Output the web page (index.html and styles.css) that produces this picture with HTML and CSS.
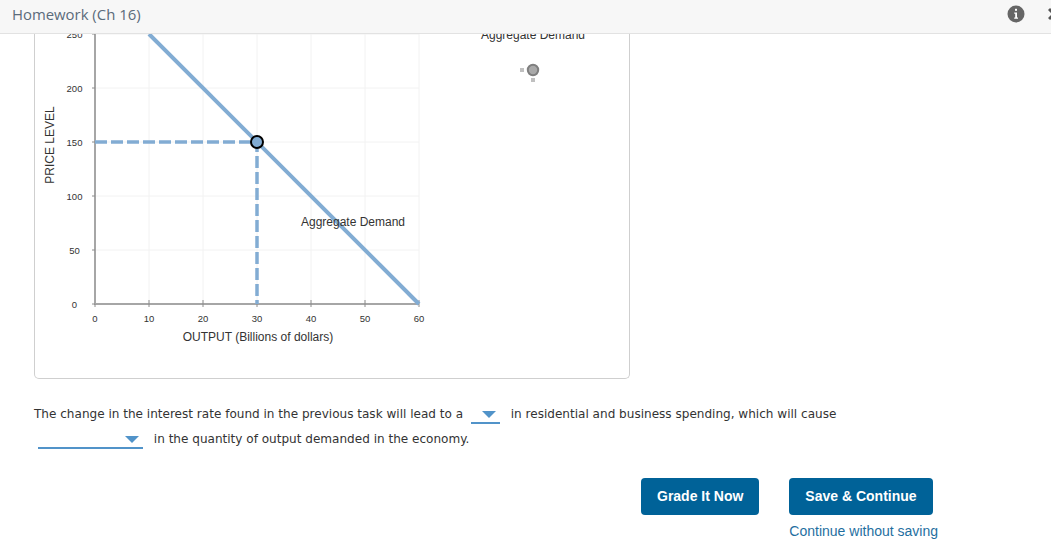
FILE: index.html
```html
<!DOCTYPE html>
<html lang="en">
<head>
<meta charset="utf-8">
<title>Homework (Ch 16)</title>
<link rel="stylesheet" href="styles.css">
</head>
<body>
<header class="topbar">
  <h1 class="title">Homework (Ch 16)</h1>
  <div class="tools">
    <svg class="icon-info" width="18" height="18" viewBox="0 0 18 18"><circle cx="9" cy="9" r="8.5" fill="#666"/><rect x="8" y="3.8" width="2" height="2" fill="#fff"/><path d="M7.2 7.4h2.8v5h1v1.4H7.2v-1.4h1V8.8h-1z" fill="#fff"/></svg>
    <svg class="icon-close" width="12" height="14" viewBox="0 0 12 14"><path d="M1 2l10 10M11 2L1 12" stroke="#555" stroke-width="3" fill="none"/></svg>
  </div>
</header>
<main class="content">
  <section class="panel">
    <svg class="graph" width="594" height="344" viewBox="35 34 594 344">
      <g class="grid">
        <path d="M149 34V304M203 34V304M257 34V304M311 34V304M365 34V304M419 34V304M95 34H419M95 88H419M95 142H419M95 196H419M95 250H419"/>
      </g>
      <g class="axis">
        <path d="M95 34V304H419"/>
        <path class="ticks" d="M92 34H95M92 88H95M92 142H95M92 196H95M92 250H95M92 304H95M95 304v3M149 300v7M203 300v7M257 300v7M311 300v7M365 300v7M419 300v7"/>
      </g>
      <g class="ylabels">
        <text x="74.5" y="38">250</text><text x="74.5" y="92">200</text><text x="74.5" y="146">150</text><text x="74.5" y="200">100</text><text x="74.5" y="254">50</text><text x="74.5" y="308">0</text>
      </g>
      <g class="xlabels">
        <text x="95" y="322">0</text><text x="149" y="322">10</text><text x="203" y="322">20</text><text x="257" y="322">30</text><text x="311" y="322">40</text><text x="365" y="322">50</text><text x="419" y="322">60</text>
      </g>
      <path class="demand" d="M149 34L419 304"/>
      <path class="guide" d="M95 142H257V304"/>
      <circle class="point" cx="257" cy="142" r="6"/>
      <text class="label" x="353" y="226">Aggregate Demand</text>
      <text class="label" x="533" y="39">Aggregate Demand</text>
      <text class="axis-title" x="258" y="341">OUTPUT (Billions of dollars)</text>
      <text class="axis-title" transform="translate(54 145) rotate(-90)">PRICE LEVEL</text>
      <rect class="handle" x="520" y="68" width="4" height="4"/>
      <rect class="handle" x="531" y="78" width="4" height="4"/>
      <circle class="legend-point" cx="533" cy="70" r="5.2"/>
    </svg>
  </section>
  <div class="question">
    <p class="line">The change in the interest rate found in the previous task will lead to a <span class="select select-short"></span> in residential and business spending, which will cause</p>
    <p class="line line-second"><span class="select select-long"></span> in the quantity of output demanded in the economy.</p>
  </div>
  <div class="actions">
    <button class="btn" type="button">Grade It Now</button>
    <div class="save-group">
      <button class="btn" type="button">Save &amp; Continue</button>
      <a class="link" href="#">Continue without saving</a>
    </div>
  </div>
</main>
</body>
</html>
```
FILE: styles.css
```css
* { box-sizing: border-box; }
html, body { margin: 0; height: 100%; overflow: hidden; background: #fff; }
body { width: 1051px; height: 547px; }

.topbar {
  display: flex;
  align-items: center;
  justify-content: space-between;
  height: 34px;
  padding: 0 0 5px 12px;
  background: #f7f7f7;
  border-bottom: 1px solid #e2e2e2;
}
.title {
  margin: 0;
  font: 400 14.9px "Open Sans", sans-serif;
  color: #5b6b7b;
}
.tools { display: flex; align-items: center; gap: 23px; margin-right: -9px; }
.icon-info, .icon-close { display: block; }

.content { padding: 0 0 0 34px; }

.panel {
  width: 596px;
  height: 345px;
  border: 1px solid #cfcfcf;
  border-top: 0;
  border-radius: 0 0 5px 5px;
  overflow: hidden;
}
.graph { display: block; font-family: "Liberation Sans", Arial, sans-serif; }
.grid path { stroke: #f2f2f2; stroke-width: 1; fill: none; }
.axis path { stroke: #a6a6a6; stroke-width: 2; fill: none; }
.axis .ticks { stroke: #8c8c8c; stroke-width: 1; }
.ylabels text { font-size: 9.5px; fill: #333; text-anchor: middle; }
.xlabels text { font-size: 9.5px; fill: #333; text-anchor: middle; }
.demand { stroke: #82acd3; stroke-width: 4; fill: none; }
.guide { stroke: #82acd3; stroke-width: 3.5; stroke-dasharray: 12 4; fill: none; }
.point { fill: #82acd3; stroke: #000; stroke-width: 2; }
.label { font-size: 12px; fill: #333; text-anchor: middle; }
.axis-title { font-size: 12px; fill: #333; text-anchor: middle; }
.handle { fill: #c0c0c0; }
.legend-point { fill: #a9a9a9; stroke: #7f7f7f; stroke-width: 2; }

.question {
  margin-top: 23px;
  font: 400 12.05px/25px "DejaVu Sans", Verdana, sans-serif;
  color: #333;
}
.line { margin: 0; white-space: nowrap; }
.select {
  position: relative;
  display: inline-block;
  height: 20px;
  vertical-align: -6px;
  border-bottom: 2px solid #5193c9;
  margin: 0 7px 0 4px;
}
.select::after {
  content: "";
  position: absolute;
  right: 4px;
  top: 7px;
  border-style: solid;
  border-width: 7px 7px 0;
  border-color: #5193c9 transparent transparent;
}
.select-short { width: 29px; }
.select-long { width: 105px; margin-left: 4px; margin-right: 7px; }

.actions {
  display: flex;
  align-items: flex-start;
  gap: 30px;
  margin: 26px 0 0 607px;
}
.btn {
  height: 37px;
  padding: 0 16px 1px;
  border: 0;
  border-radius: 4px;
  background: #006298;
  color: #fff;
  font: 700 14px "Liberation Sans", Arial, sans-serif;
}
.save-group { display: flex; flex-direction: column; align-items: flex-start; }
.link {
  margin-top: 7px;
  font: 400 14px/18px "Liberation Sans", Arial, sans-serif;
  color: #1f6f9f;
  text-decoration: none;
  white-space: nowrap;
}
```
